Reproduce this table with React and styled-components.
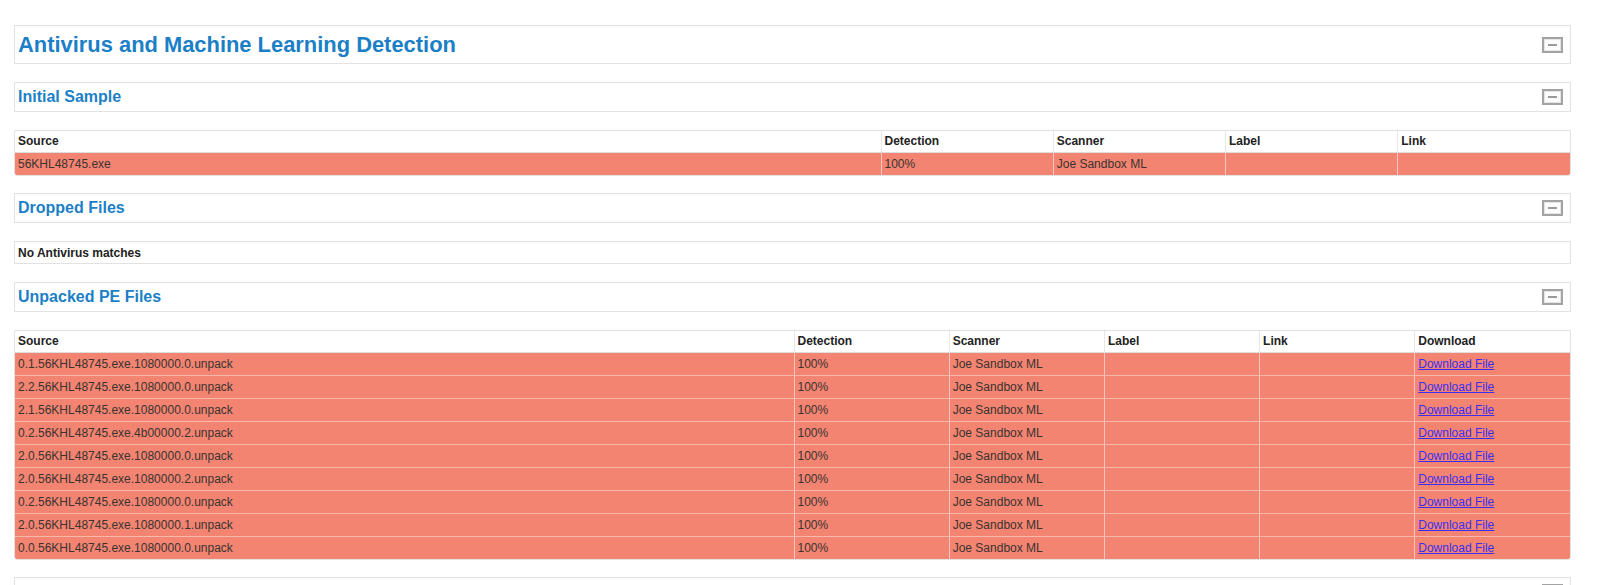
import React from "react";
import styled, { createGlobalStyle } from "styled-components";

const GlobalStyle = createGlobalStyle`
  html, body { margin: 0; padding: 0; background: #ffffff; }
  body { font-family: "Liberation Sans", Arial, sans-serif; color: #222; }
`;

const Page = styled.div`
  display: flex;
  flex-direction: column;
  gap: 18px;
  padding: 25px 29px 0 14px;
  height: 585px;
  box-sizing: border-box;
  overflow: hidden;
`;

const HeaderBox = styled.div`
  display: flex;
  align-items: center;
  justify-content: space-between;
  box-sizing: border-box;
  height: ${(p) => (p.$main ? "39px" : "30px")};
  padding: 0 7px 0 3px;
  border: 1px solid #e2e2e2;
  background: #fff;
  flex-shrink: 0;
`;

const Title = styled.h2`
  margin: 0;
  font-family: "Liberation Sans", Arial, sans-serif;
  font-weight: bold;
  font-size: ${(p) => (p.$main ? "21.9px" : "16px")};
  color: #1b7fc7;
  line-height: 1;
`;

const Collapse = styled.span`
  position: relative;
  display: inline-block;
  margin-left: auto;
  width: 21px;
  height: 16px;
  box-sizing: border-box;
  border: 2px solid #a3a3a3;
  background: #fdfdfd;
  box-shadow: inset 0 0 0 1px #e6e6e6;
  &::after {
    content: "";
    position: absolute;
    left: 4px;
    right: 4px;
    top: 5px;
    height: 2px;
    background: #9a9a9a;
  }
`;

const Notice = styled.div`
  box-sizing: border-box;
  height: 23px;
  border: 1px solid #e2e2e2;
  padding: 0 3px;
  display: flex;
  align-items: center;
  font-weight: bold;
  font-size: 12px;
  color: #222;
  flex-shrink: 0;
`;

const TableWrap = styled.div`
  border: 1px solid #e2e2e2;
  border-radius: 0 0 3px 3px;
  overflow: hidden;
  flex-shrink: 0;
  margin-bottom: -1px;
`;

const Table = styled.table`
  width: 100%;
  border-collapse: collapse;
  table-layout: fixed;
  font-size: 12px;
`;

const Th = styled.th`
  text-align: left;
  font-weight: bold;
  color: #222;
  line-height: 21px;
  height: 21px;
  padding: 0 3px;
  border-bottom: 1px solid #dedede;
  border-left: 1px solid #e6e6e6;
  &:first-child { border-left: none; }
  white-space: nowrap;
  overflow: hidden;
`;

const Tr = styled.tr`
  background: #f38471;
  &:last-child td { border-bottom: none; }
`;

const Td = styled.td`
  color: #3a3330;
  line-height: 22px;
  height: 22px;
  padding: 0 3px;
  border-bottom: 1px solid #f6b8ab;
  border-left: 1px solid #f8c6bb;
  &:first-child { border-left: none; }
  white-space: nowrap;
  overflow: hidden;
`;

const DlLink = styled.a`
  color: #3a2ff0;
  text-decoration: underline;
  cursor: pointer;
`;

const Section = ({ title, main }) => (
  <HeaderBox $main={main}>
    {title ? <Title $main={main}>{title}</Title> : null}
    <Collapse />
  </HeaderBox>
);

const unpacked = [
  "0.1.56KHL48745.exe.1080000.0.unpack",
  "2.2.56KHL48745.exe.1080000.0.unpack",
  "2.1.56KHL48745.exe.1080000.0.unpack",
  "0.2.56KHL48745.exe.4b00000.2.unpack",
  "2.0.56KHL48745.exe.1080000.0.unpack",
  "2.0.56KHL48745.exe.1080000.2.unpack",
  "0.2.56KHL48745.exe.1080000.0.unpack",
  "2.0.56KHL48745.exe.1080000.1.unpack",
  "0.0.56KHL48745.exe.1080000.0.unpack",
];

export default function App() {
  return (
    <>
      <GlobalStyle />
      <Page>
        <Section main title="Antivirus and Machine Learning Detection" />
        <Section title="Initial Sample" />
        <TableWrap>
          <Table>
            <colgroup>
              <col style={{ width: "866px" }} />
              <col />
              <col />
              <col />
              <col />
            </colgroup>
            <thead>
              <tr>
                <Th>Source</Th>
                <Th>Detection</Th>
                <Th>Scanner</Th>
                <Th>Label</Th>
                <Th>Link</Th>
              </tr>
            </thead>
            <tbody>
              <Tr>
                <Td>56KHL48745.exe</Td>
                <Td>100%</Td>
                <Td>Joe Sandbox ML</Td>
                <Td></Td>
                <Td></Td>
              </Tr>
            </tbody>
          </Table>
        </TableWrap>
        <Section title="Dropped Files" />
        <Notice>No Antivirus matches</Notice>
        <Section title="Unpacked PE Files" />
        <TableWrap>
          <Table>
            <colgroup>
              <col style={{ width: "779px" }} />
              <col />
              <col />
              <col />
              <col />
              <col />
            </colgroup>
            <thead>
              <tr>
                <Th>Source</Th>
                <Th>Detection</Th>
                <Th>Scanner</Th>
                <Th>Label</Th>
                <Th>Link</Th>
                <Th>Download</Th>
              </tr>
            </thead>
            <tbody>
              {unpacked.map((name, i) => (
                <Tr key={i}>
                  <Td>{name}</Td>
                  <Td>100%</Td>
                  <Td>Joe Sandbox ML</Td>
                  <Td></Td>
                  <Td></Td>
                  <Td>
                    <DlLink>Download File</DlLink>
                  </Td>
                </Tr>
              ))}
            </tbody>
          </Table>
        </TableWrap>
        <Section />
      </Page>
    </>
  );
}
